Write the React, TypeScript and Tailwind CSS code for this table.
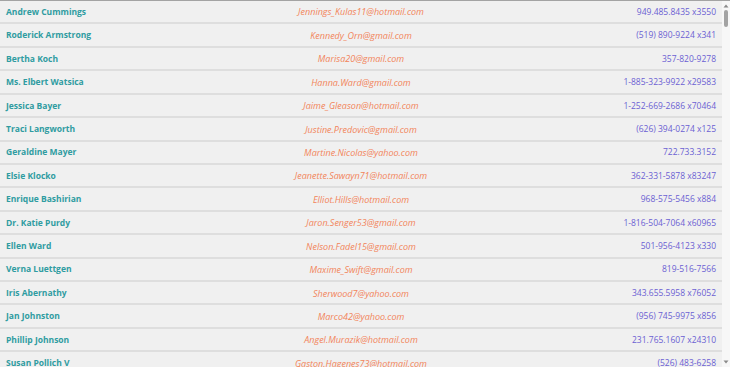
import React from "react"

type Contact = { name: string; email: string; phone: string }

const CONTACTS: Contact[] = [
  { name: "Andrew Cummings", email: "Jennings_Kulas11@hotmail.com", phone: "949.485.8435 x3550" },
  { name: "Roderick Armstrong", email: "Kennedy_Orn@gmail.com", phone: "(519) 890-9224 x341" },
  { name: "Bertha Koch", email: "Marisa20@gmail.com", phone: "357-820-9278" },
  { name: "Ms. Elbert Watsica", email: "Hanna.Ward@gmail.com", phone: "1-885-323-9922 x29583" },
  { name: "Jessica Bayer", email: "Jaime_Gleason@hotmail.com", phone: "1-252-669-2686 x70464" },
  { name: "Traci Langworth", email: "Justine.Predovic@gmail.com", phone: "(626) 394-0274 x125" },
  { name: "Geraldine Mayer", email: "Martine.Nicolas@yahoo.com", phone: "722.733.3152" },
  { name: "Elsie Klocko", email: "Jeanette.Sawayn71@hotmail.com", phone: "362-331-5878 x83247" },
  { name: "Enrique Bashirian", email: "Elliot.Hills@hotmail.com", phone: "968-575-5456 x884" },
  { name: "Dr. Katie Purdy", email: "Jaron.Senger53@gmail.com", phone: "1-816-504-7064 x60965" },
  { name: "Ellen Ward", email: "Nelson.Fadel15@gmail.com", phone: "501-956-4123 x330" },
  { name: "Verna Luettgen", email: "Maxime_Swift@gmail.com", phone: "819-516-7566" },
  { name: "Iris Abernathy", email: "Sherwood7@yahoo.com", phone: "343.655.5958 x76052" },
  { name: "Jan Johnston", email: "Marco42@yahoo.com", phone: "(956) 745-9975 x856" },
  { name: "Phillip Johnson", email: "Angel.Murazik@hotmail.com", phone: "231.765.1607 x24310" },
  { name: "Susan Pollich V", email: "Gaston.Hagenes73@hotmail.com", phone: "(526) 483-6258" },
]

function Scrollbar() {
  // thin classic scrollbar: arrow, thumb near the top, arrow
  return (
    <div className="flex w-[8px] shrink-0 flex-col items-center bg-[#f7f7f7]">
      <svg width="6" height="6" viewBox="0 0 6 6" className="mt-[2px]">
        <path d="M3 1.5 L5.5 4.5 L0.5 4.5 Z" fill="#8a8a8a" />
      </svg>
      <div className="mt-[1px] h-[17px] w-[4px] rounded-full bg-[#a3a3a3]" />
      <div className="flex-1" />
      <svg width="6" height="6" viewBox="0 0 6 6" className="mb-[2px]">
        <path d="M0.5 1.5 L5.5 1.5 L3 4.5 Z" fill="#8a8a8a" />
      </svg>
    </div>
  )
}

export default function App() {
  return (
    <div
      className="flex h-[367px] w-[730px] border-t border-[#a3a3a3] bg-[#f0f0f0]"
      style={{ fontFamily: '"Open Sans", "Noto Sans", sans-serif' }}
    >
      <div className="min-w-0 flex-1 overflow-hidden">
        {CONTACTS.map((c, i) => (
          <div
            key={i}
            className="grid h-[23.43px] grid-cols-3 items-center border-b-2 border-[#dedede] px-[6px] pt-[1px]"
          >
            <span className="whitespace-nowrap text-[8.5px] font-bold text-[#2f9ca1]">{c.name}</span>
            <span className="whitespace-nowrap text-center text-[9px] italic text-[#f2845a]">{c.email}</span>
            <span className="whitespace-nowrap text-right text-[8.5px] text-[#6b5fd3]">{c.phone}</span>
          </div>
        ))}
      </div>
      <Scrollbar />
    </div>
  )
}
